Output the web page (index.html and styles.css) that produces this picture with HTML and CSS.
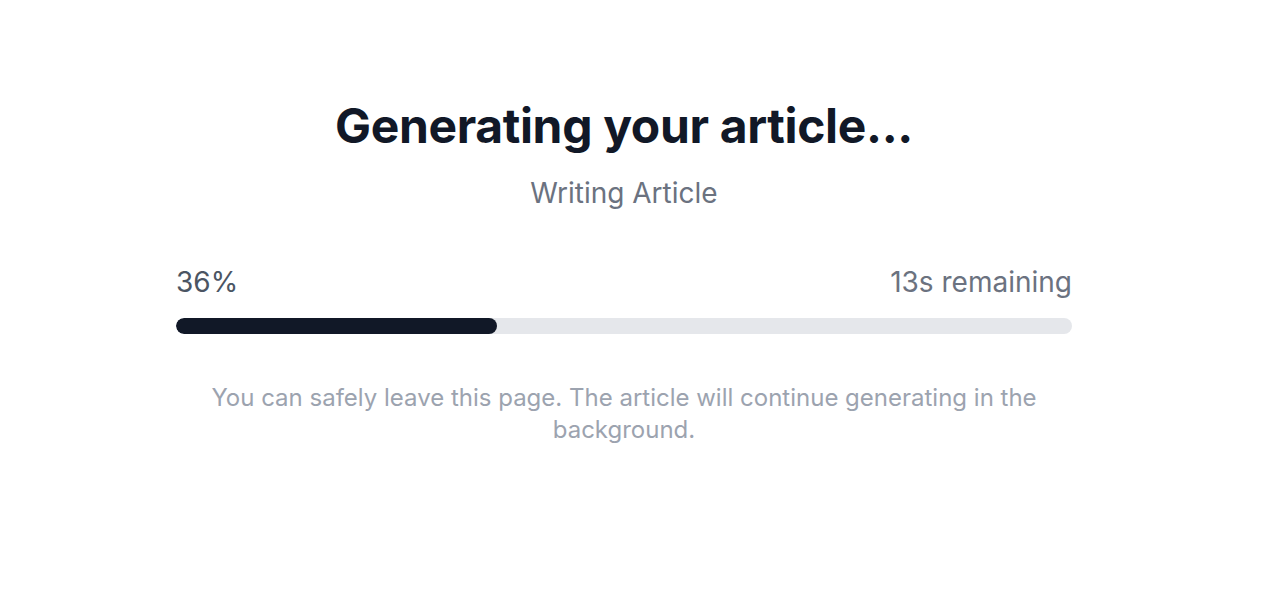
FILE: index.html
```html
<!DOCTYPE html>
<html lang="en">
<head>
<meta charset="utf-8">
<title>Generating your article</title>
<link rel="stylesheet" href="styles.css">
</head>
<body>
<main class="page">
  <section class="panel">
    <h1 class="title">Generating your article...</h1>
    <p class="stage">Writing Article</p>
    <div class="progress">
      <div class="progress-labels">
        <span class="percent">36%</span>
        <span class="remaining">13s remaining</span>
      </div>
      <div class="track"><div class="fill" style="width: 35.8%"></div></div>
    </div>
    <p class="note">You can safely leave this page. The article will continue generating in the background.</p>
  </section>
</main>
</body>
</html>
```

FILE: styles.css
```css
* { box-sizing: border-box; }
html, body { margin: 0; padding: 0; background: #ffffff; }
body { font-family: Inter, "Noto Sans", sans-serif; }
.page {
  display: flex;
  justify-content: center;
  padding-top: 96px;
  padding-right: 28px;
}
.panel {
  width: 896px;
  display: flex;
  flex-direction: column;
  align-items: center;
}
.title {
  margin: 0;
  font-size: 48px;
  line-height: 60px;
  font-weight: 700;
  color: #111827;
  letter-spacing: -0.35px;
}
.stage {
  margin: 21px 0 0;
  font-size: 28px;
  line-height: 32px;
  color: #6b7280;
}
.progress {
  width: 100%;
  margin-top: 55px;
}
.progress-labels {
  display: flex;
  justify-content: space-between;
  font-size: 28px;
  line-height: 36px;
}
.percent { color: #4b5563; }
.remaining { color: #6b7280; }
.track {
  margin-top: 18px;
  height: 16px;
  border-radius: 8px;
  background: #e5e7eb;
  overflow: hidden;
}
.fill {
  height: 100%;
  background: #111827;
  border-radius: 8px;
}
.note {
  margin: 48px 0 0;
  width: 100%;
  text-align: center;
  font-size: 24px;
  line-height: 32px;
  color: #9ca3af;
}
```
